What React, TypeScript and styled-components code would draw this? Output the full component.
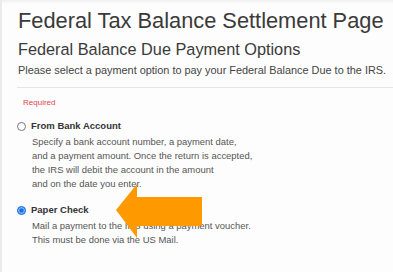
import React from "react";
import styled, { createGlobalStyle } from "styled-components";

const Global = createGlobalStyle`
  html, body { margin: 0; padding: 0; background: #fdfdfd; }
  body { font-family: "Liberation Sans", Arial, sans-serif; color: #333; }
`;

const Page = styled.div`
  position: relative;
  width: 393px;
  height: 272px;
  box-sizing: border-box;
  border-left: 2px solid #ebebeb;
  background: linear-gradient(#f0f0f0 0px, #fdfdfd 4px);
  padding: 8px 0 0 16px;
  overflow: hidden;
`;

const Title = styled.h1`
  margin: 0;
  font-size: 21.8px;
  font-weight: 400;
  color: #3a3a3a;
  line-height: 26px;
  white-space: nowrap;
`;

const Subtitle = styled.h2`
  margin: 5px 0 0 0;
  font-size: 16.3px;
  font-weight: 400;
  color: #3a3a3a;
  line-height: 20px;
  white-space: nowrap;
`;

const Lead = styled.p`
  margin: 4px 0 0 0;
  font-size: 10.9px;
  color: #444;
  line-height: 15px;
  white-space: nowrap;
`;

const Rule = styled.hr`
  margin: 9px 0 0 -1px;
  border: 0;
  border-top: 1px solid #e6e6e6;
`;

const Required = styled.div`
  margin: 10px 0 0 5px;
  font-size: 8px;
  line-height: 10px;
  color: #e0474f;
`;

const Options = styled.div`
  display: flex;
  flex-direction: column;
  gap: 12px;
  margin-top: 11px;
`;

const Option = styled.label`
  display: grid;
  grid-template-columns: 14px 1fr;
  align-items: start;
`;

const Radio = styled.span<{ $checked?: boolean }>`
  width: 9px;
  height: 9px;
  margin: 3px 0 0 -1px;
  box-sizing: border-box;
  border-radius: 50%;
  border: 1px solid ${(p) => (p.$checked ? "#1a73e8" : "#777")};
  background: ${(p) => (p.$checked ? "#1a73e8" : "#fff")};
  box-shadow: ${(p) => (p.$checked ? "inset 0 0 0 1.2px #8fb8f5" : "none")};
`;

const OptionBody = styled.div`
  display: flex;
  flex-direction: column;
  margin-left: -1px;
`;

const OptionLabel = styled.div`
  font-size: 9.5px;
  font-weight: 700;
  line-height: 14px;
  margin-bottom: 2px;
  color: #333;
`;

const OptionText = styled.div`
  font-size: 9.45px;
  line-height: 14px;
  color: #555;
  white-space: nowrap;
  margin-left: 1px;
`;

const Arrow = styled.svg`
  position: absolute;
  left: 112px;
  top: 182px;
`;

export default function App() {
  return (
    <>
      <Global />
      <Page>
        <Title>Federal Tax Balance Settlement Page</Title>
        <Subtitle>Federal Balance Due Payment Options</Subtitle>
        <Lead>Please select a payment option to pay your Federal Balance Due to the IRS.</Lead>
        <Rule />
        <Required>Required</Required>
        <Options>
          <Option>
            <Radio />
            <OptionBody>
              <OptionLabel>From Bank Account</OptionLabel>
              <OptionText>
                Specify a bank account number, a payment date,
                <br />
                and a payment amount. Once the return is accepted,
                <br />
                the IRS will debit the account in the amount
                <br />
                and on the date you enter.
              </OptionText>
            </OptionBody>
          </Option>
          <Option>
            <Radio $checked />
            <OptionBody>
              <OptionLabel>Paper Check</OptionLabel>
              <OptionText>
                Mail a payment to the IRS using a payment voucher.
                <br />
                This must be done via the US Mail.
              </OptionText>
            </OptionBody>
          </Option>
        </Options>
        <Arrow width="92" height="62" viewBox="0 0 92 62">
          <polygon
            points="2,28 23,2 23,15 88,15 88,44 23,44 23,56"
            fill="#ff9900"
          />
        </Arrow>
      </Page>
    </>
  );
}
